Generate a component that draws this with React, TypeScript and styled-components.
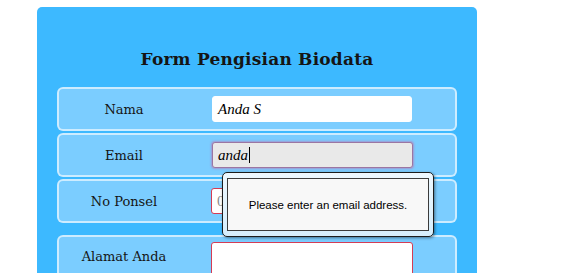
import styled, { createGlobalStyle, css } from "styled-components";

const GlobalStyle = createGlobalStyle`
  html, body {
    margin: 0;
    padding: 0;
    background: #ffffff;
    overflow: hidden;
  }
`;

const FormCard = styled.form`
  box-sizing: border-box;
  width: 440px;
  height: 300px;
  margin: 7px 0 0 37px;
  padding: 42px 20px 0;
  background: #3db9ff;
  border-radius: 5px 5px 0 0;
`;

const Title = styled.h1`
  margin: 0 0 18px;
  font-family: "DejaVu Serif", "Liberation Serif", serif;
  font-weight: bold;
  font-size: 17px;
  line-height: 20px;
  letter-spacing: 0.2px;
  color: #151515;
  text-align: center;
`;

const Rows = styled.div`
  display: flex;
  flex-direction: column;
  gap: 2px;
`;

const Row = styled.div<{ $tall?: boolean }>`
  box-sizing: border-box;
  display: grid;
  grid-template-columns: 130px 1fr;
  align-items: center;
  height: 44px;
  border: 2px solid rgba(214, 240, 255, 0.9);
  border-radius: 6px;
  background: #7bcdff;

  ${(p) =>
    p.$tall &&
    css`
      align-items: start;
      height: 90px;
      margin-top: 10px;
      padding-top: 5px;
    `}
`;

const Label = styled.label<{ $offset?: number }>`
  font-family: "DejaVu Serif", "Liberation Serif", serif;
  font-size: 13px;
  line-height: 17px;
  color: #151515;
  text-align: center;
  margin-top: ${(p) => p.$offset ?? 0}px;
`;

const Field = styled.div`
  position: relative;
  margin-left: 23px;
  width: 201px;
`;

type FieldState = "valid" | "focus" | "invalid";

const inputState = {
  valid: css`
    width: 200px;
    background: #ffffff;
    border-color: #ffffff;
  `,
  focus: css`
    width: 201px;
    background: #e9e9e9;
    border-color: #9b76a3;
    box-shadow: 0 0 2px 1px rgba(176, 130, 190, 0.7);
  `,
  invalid: css`
    width: 201px;
    margin-left: -1px;
    background: #ffffff;
    border-color: #d43c55;
  `,
};

const TextInput = styled.div<{ $state: FieldState }>`
  box-sizing: border-box;
  display: flex;
  align-items: center;
  height: 26px;
  padding: 0 5px;
  border: 1px solid;
  border-radius: 3px;
  font-family: "Liberation Serif", serif;
  font-style: italic;
  font-size: 15px;
  color: #000000;
  ${(p) => inputState[p.$state]}
`;

const Placeholder = styled.span`
  color: #8a8a8a;
  font-style: normal;
`;

const Caret = styled.span`
  display: inline-block;
  width: 1px;
  height: 16px;
  margin-left: 1px;
  background: #000000;
`;

const TextArea = styled.textarea`
  box-sizing: border-box;
  display: block;
  width: 202px;
  height: 70px;
  margin: 0 0 0 -1px;
  border: 1px solid #d43c55;
  border-radius: 3px;
  background: #ffffff;
  resize: none;
  outline: none;
`;

const Tooltip = styled.div`
  position: absolute;
  top: calc(100% + 4px);
  left: 10px;
  z-index: 2;
  box-sizing: border-box;
  width: 212px;
  height: 65px;
  padding: 5px 4px;
  border: 1px solid #1c1c1c;
  border-radius: 5px;
  background: linear-gradient(180deg, #eef8ff 0%, #d6eefc 100%);
  box-shadow: 1px 1px 3px rgba(0, 0, 0, 0.45);
`;

const TooltipBody = styled.div`
  box-sizing: border-box;
  display: flex;
  align-items: center;
  justify-content: center;
  height: 100%;
  border: 1px solid #3b3b3b;
  background: #f8f8f8;
  font-family: "Liberation Sans", Arial, sans-serif;
  font-size: 11.5px;
  color: #000000;
`;

export default function App() {
  return (
    <>
      <GlobalStyle />
      <FormCard onSubmit={(e) => e.preventDefault()}>
        <Title>Form Pengisian Biodata</Title>
        <Rows>
          <Row>
            <Label>Nama</Label>
            <Field>
              <TextInput $state="valid">Anda S</TextInput>
            </Field>
          </Row>
          <Row>
            <Label>Email</Label>
            <Field>
              <TextInput $state="focus">
                anda
                <Caret />
              </TextInput>
              <Tooltip>
                <TooltipBody>Please enter an email address.</TooltipBody>
              </Tooltip>
            </Field>
          </Row>
          <Row>
            <Label>No Ponsel</Label>
            <Field>
              <TextInput $state="invalid">
                <Placeholder>0</Placeholder>
              </TextInput>
            </Field>
          </Row>
          <Row $tall>
            <Label $offset={6}>Alamat Anda</Label>
            <Field>
              <TextArea readOnly />
            </Field>
          </Row>
        </Rows>
      </FormCard>
    </>
  );
}
